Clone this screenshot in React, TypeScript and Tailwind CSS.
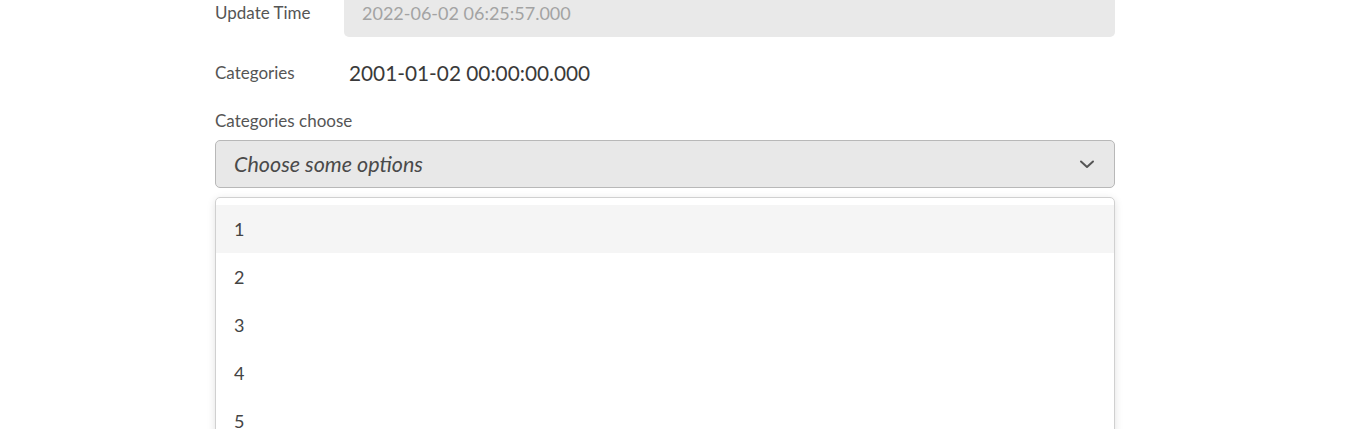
import React from "react";

export default function App() {
  const font = { fontFamily: '"Source Sans Pro", Lato, "Noto Sans", sans-serif' };
  return (
    <div className="w-[1367px] h-[429px] overflow-hidden bg-white" style={font}>
      <div className="ml-[215px] w-[900px] flex flex-col">
        <div className="flex items-center -mt-[11px]">
          <div className="w-[129px] text-[17px] text-[#555]">Update Time</div>
          <div className="flex-1 h-[48px] rounded-[5px] bg-[#e9e9e9] flex items-center pl-[18px] text-[18px] text-[#a3a3a3]">
            2022-06-02 06:25:57.000
          </div>
        </div>
        <div className="flex items-center mt-[23px] h-[26px]">
          <div className="w-[134px] text-[17px] text-[#555]">Categories</div>
          <div className="text-[20.8px] text-[#3a3a3a]">2001-01-02 00:00:00.000</div>
        </div>
        <div className="mt-[23px] h-[24px] flex items-center text-[17px] text-[#555]">Categories choose</div>
        <div className="mt-[7px] h-[48px] rounded-[5px] border border-[#b8b8b8] bg-[#e8e8e8] flex items-center justify-between pl-[18px] pr-[18px]">
          <span className="italic text-[21.5px] text-[#4a4a4a]">Choose some options</span>
          <svg width="18" height="12" viewBox="0 0 18 12" fill="none">
            <path d="M3 3.5 L9 9 L15 3.5" stroke="#555" strokeWidth="2" strokeLinecap="round" strokeLinejoin="round" />
          </svg>
        </div>
        <div className="mt-[9px] rounded-t-[5px] border border-[#d0d0d0] shadow-[0_2px_8px_rgba(0,0,0,0.12)] pt-[7px] h-[260px] bg-white">
          {["1", "2", "3", "4", "5"].map((n, i) => (
            <div
              key={n}
              className={`h-[48px] flex items-center pl-[18px] text-[18px] text-[#444] ${i === 0 ? "bg-[#f5f5f5]" : ""}`}
            >
              {n}
            </div>
          ))}
        </div>
      </div>
    </div>
  );
}
